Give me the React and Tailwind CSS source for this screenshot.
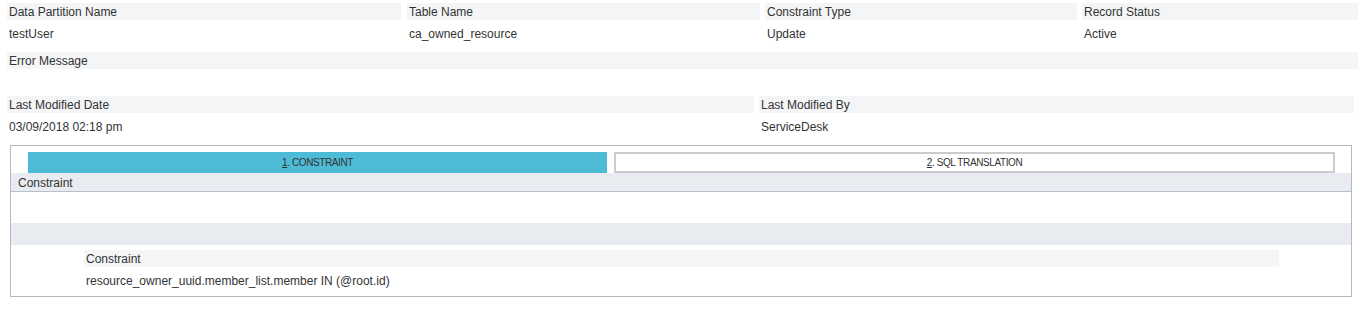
import React from 'react';

const Label = ({ children, className = '' }) => (
    <div className={`h-[17px] bg-[#f4f5f7] pl-[2px] pt-px leading-[17px] ${className}`}>{children}</div>
);

const Value = ({ children }) => (
    <div className="h-[32px] pl-[2px] pt-[6px] leading-[16px]">{children}</div>
);

export default function App() {
    return (
        <div className="w-[1358px] h-[314px] bg-white text-[12px] text-[#333] font-['Liberation_Sans',Arial,sans-serif] overflow-hidden">
            {/* record details */}
            <div className="pt-[3px] pl-[7px]">
                <div className="grid grid-cols-[400px_358px_317px_276px]">
                    <Label className="w-[394px]">Data Partition Name</Label>
                    <Label className="w-[353px]">Table Name</Label>
                    <Label className="w-[312px]">Constraint Type</Label>
                    <Label>Record Status</Label>
                    <Value>testUser</Value>
                    <Value>ca_owned_resource</Value>
                    <Value>Update</Value>
                    <Value>Active</Value>
                </div>
                <Label>Error Message</Label>
                <div className="h-[27px]" />
                <div className="grid grid-cols-[752px_595px]">
                    <Label className="w-[747px]">Last Modified Date</Label>
                    <Label>Last Modified By</Label>
                    <Value>03/09/2018 02:18 pm</Value>
                    <Value>ServiceDesk</Value>
                </div>
            </div>

            {/* tabs panel */}
            <div className="ml-[10px] w-[1342px] h-[152px] border border-[#b4b8c0] pt-[6px] flex flex-col">
                <div className="flex gap-[7px] pl-[17px] h-[21px] text-[10px] tracking-[-0.4px]">
                    <button className="w-[579px] bg-[#4dbad6] text-[#333] flex items-center justify-center">
                        <span><u>1</u>. CONSTRAINT</span>
                    </button>
                    <button className="w-[721px] bg-white border-2 border-[#cccccc] text-[#333] flex items-center justify-center">
                        <span><u>2</u>. SQL TRANSLATION</span>
                    </button>
                </div>
                <div className="h-[19px] bg-[#e8ebef] border-b border-[#b8bfcc] pl-[7px] pt-px leading-[18px]">Constraint</div>
                <div className="h-[31px]" />
                <div className="h-[22px] bg-[#e8ebef]" />
                <div className="pl-[73px] pt-[5px]">
                    <div className="w-[1195px]">
                        <Label>Constraint</Label>
                    </div>
                    <div className="pl-[2px] pt-[6px] leading-[16px]">resource_owner_uuid.member_list.member IN (@root.id)</div>
                </div>
            </div>
        </div>
    );
}
